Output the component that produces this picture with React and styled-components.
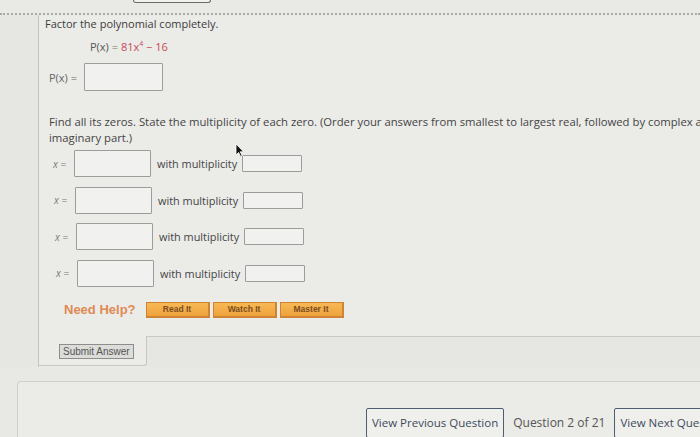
import React from 'react';
import styled, { createGlobalStyle } from 'styled-components';

const GlobalStyle = createGlobalStyle`
  html, body {
    margin: 0;
    padding: 0;
    background: #e6e6e3;
  }
`;

const zeroRows = [
  { shift: 0 },
  { shift: 1 },
  { shift: 2 },
  { shift: 3 },
];

const App = () => {
  return (
    <>
      <GlobalStyle />
      <Screen>
        {/* 상단 바 */}
        <TopStrip>
          <TopTab />
        </TopStrip>
        <DottedRule />

        <Body>
          <QuestionPanel>
            <Title>Factor the polynomial completely.</Title>
            <Equation>
              P(x) <Gray>=</Gray> <Red>81x<sup>4</sup> − 16</Red>
            </Equation>

            <AnswerRow>
              <Label>P(x) =</Label>
              <InputBox $w={79} $h={28} />
            </AnswerRow>

            <Instructions>
              <Line $nowrap>
                Find all its zeros. State the multiplicity of each zero. (Order your answers from smallest to largest real, followed by complex answers by increasing
              </Line>
              <Line>imaginary part.)</Line>
              <Cursor width="10" height="14" viewBox="0 0 10 14">
                <path d="M1 1 L1 12 L3.6 9.4 L5.6 13.4 L7.2 12.6 L5.2 8.8 L8.6 8.8 Z" fill="#111" stroke="#fff" strokeWidth="0.8" />
              </Cursor>
            </Instructions>

            {/* 근 입력 */}
            <Zeros>
              {zeroRows.map((r, i) => (
                <ZeroRow key={i} $shift={r.shift}>
                  <XLabel>
                    <i>x</i> =
                  </XLabel>
                  <InputBox $w={77} $h={27} />
                  <MultText>with multiplicity</MultText>
                  <InputBox $w={60} $h={17} />
                </ZeroRow>
              ))}
            </Zeros>

            <HelpRow>
              <NeedHelp>Need Help?</NeedHelp>
              <HelpButton>Read It</HelpButton>
              <HelpButton>Watch It</HelpButton>
              <HelpButton>Master It</HelpButton>
            </HelpRow>

            <Footer>
              <SubmitTab>
                <SubmitButton>Submit Answer</SubmitButton>
              </SubmitTab>
              <FooterRest />
            </Footer>
          </QuestionPanel>
        </Body>

        {/* 하단 네비게이션 */}
        <NavPanel>
          <NavButton>View Previous Question</NavButton>
          <Counter>Question 2 of 21</Counter>
          <NavButton>View Next Question</NavButton>
        </NavPanel>
      </Screen>
    </>
  );
};

export default App;

const Screen = styled.div`
  position: relative;
  width: 700px;
  height: 437px;
  overflow: hidden;
  background: #e8e8e5;
  font-family: 'Open Sans', 'DejaVu Sans', sans-serif;
  color: #3f3f3f;
`;

const TopStrip = styled.div`
  display: flex;
  height: 13px;
  padding-left: 133px;
  background: #e9e9e6;
`;

const TopTab = styled.div`
  width: 76px;
  height: 2px;
  border: 1px solid #6b6b6b;
  border-top: none;
  border-radius: 0 0 3px 3px;
  background: #f1f1ee;
`;

const DottedRule = styled.div`
  height: 0;
  border-top: 2px dotted #a9a9a9;
`;

const Body = styled.div`
  display: flex;
  padding-left: 38px;
  background: #e6e6e3;
`;

const QuestionPanel = styled.div`
  position: relative;
  flex: 1;
  display: flex;
  flex-direction: column;
  border-left: 1px solid #c4c4c0;
  background: #ebebe8;
`;

const Title = styled.div`
  margin: 1px 0 0 6px;
  font-size: 11px;
  line-height: 15px;
  color: #3c3c3c;
`;

const Equation = styled.div`
  margin: 8px 0 0 51px;
  font-size: 11px;
  line-height: 15px;
  color: #555;

  sup {
    font-size: 7px;
    line-height: 0;
  }
`;

const Gray = styled.span`
  color: #777;
`;

const Red = styled.span`
  color: #c8485a;
`;

const AnswerRow = styled.div`
  display: flex;
  align-items: center;
  gap: 7px;
  margin: 9px 0 0 10px;
`;

const Label = styled.span`
  font-size: 11px;
  color: #666;
`;

const InputBox = styled.div`
  width: ${(p) => p.$w}px;
  height: ${(p) => p.$h}px;
  box-sizing: border-box;
  border: 1px solid #9c9c9a;
  border-radius: 1px;
  background: #f1f1ef;
`;

const Instructions = styled.div`
  position: relative;
  margin: 23px 0 0 10px;
  font-size: 11.3px;
  line-height: 16px;
  color: #444;
`;

const Line = styled.div`
  white-space: ${(p) => (p.$nowrap ? 'nowrap' : 'normal')};
`;

const Cursor = styled.svg`
  position: absolute;
  left: 186px;
  top: 29px;
`;

const Zeros = styled.div`
  display: flex;
  flex-direction: column;
  gap: 9.5px;
  margin-top: 4px;
`;

const ZeroRow = styled.div`
  display: flex;
  align-items: center;
  padding-left: ${(p) => 14 + p.$shift}px;
`;

const XLabel = styled.span`
  width: 21px;
  font-size: 10px;
  color: #777;
`;

const MultText = styled.span`
  margin: 0 5px 0 6px;
  font-size: 10.9px;
  color: #444;
`;

const HelpRow = styled.div`
  display: flex;
  align-items: center;
  gap: 3px;
  margin: 15px 0 0 25px;
`;

const NeedHelp = styled.span`
  margin-right: 7px;
  font-family: 'Liberation Sans', Arial, sans-serif;
  font-size: 13px;
  font-weight: bold;
  color: #df8a52;
`;

const HelpButton = styled.div`
  display: flex;
  align-items: center;
  justify-content: center;
  width: 64px;
  height: 16px;
  box-sizing: border-box;
  border: 1px solid #cf8434;
  border-right-width: 2px;
  border-bottom-width: 2px;
  background: linear-gradient(#f7b955, #eea23c);
  font-family: 'Liberation Sans', Arial, sans-serif;
  font-size: 8.5px;
  font-weight: bold;
  color: #7d4d1f;
`;

const Footer = styled.div`
  display: flex;
  align-items: flex-start;
  margin-top: 18px;
`;

const SubmitTab = styled.div`
  display: flex;
  align-items: center;
  width: 108px;
  height: 30px;
  box-sizing: border-box;
  padding: 2px 0 0 20px;
  border-right: 1px solid #c6c6c2;
  border-bottom: 1px solid #c6c6c2;
  border-radius: 0 0 3px 0;
`;

const SubmitButton = styled.div`
  padding: 1px 3px;
  border: 1px solid #8d8d8d;
  background: #dcdcd9;
  font-family: 'Liberation Sans', Arial, sans-serif;
  font-size: 10px;
  color: #555;
`;

const FooterRest = styled.div`
  flex: 1;
  height: 30px;
  border-top: 1px solid #c9c9c5;
  background: #e6e6e3;
`;

const NavPanel = styled.div`
  display: flex;
  align-items: flex-start;
  gap: 9px;
  margin: 14px 0 0 17px;
  padding: 26px 0 0 348px;
  height: 40px;
  border-top: 1px solid #cfcfcb;
  border-left: 1px solid #cfcfcb;
  border-top-left-radius: 4px;
  background: #ebebe8;
`;

const NavButton = styled.div`
  flex-shrink: 0;
  height: 28px;
  display: flex;
  align-items: center;
  padding: 0 5px;
  border: 1.5px solid #4f5d70;
  border-radius: 2px;
  background: #efefec;
  font-size: 11.5px;
  color: #3d4a5c;
  white-space: nowrap;
`;

const Counter = styled.span`
  line-height: 30px;
  font-size: 12px;
  color: #555;
  white-space: nowrap;
`;
